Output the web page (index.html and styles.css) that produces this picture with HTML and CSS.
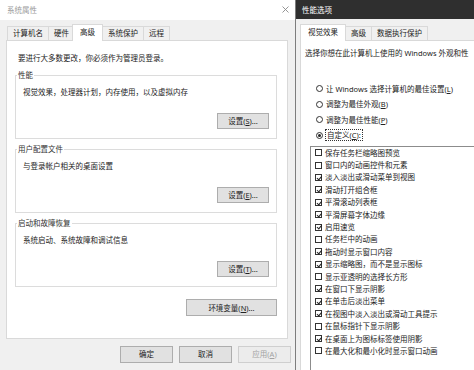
FILE: index.html
```html
<!DOCTYPE html>
<html lang="zh-CN">
<head>
    <meta charset="UTF-8">
    <title>系统属性</title>
    <link rel="stylesheet" href="styles.css">
</head>
<body>

<div class="screen">

    <!-- 系统属性 -->
    <div class="win sys">
        <div class="titlebar">
            <span class="title">系统属性</span>
            <svg class="close" width="7" height="7" viewBox="0 0 7 7">
                <path d="M0.5 0.5 L6.5 6.5 M6.5 0.5 L0.5 6.5" stroke="#8a8a8a" stroke-width="0.9"/>
            </svg>
        </div>

        <div class="tabs">
            <div class="tab">计算机名</div>
            <div class="tab">硬件</div>
            <div class="tab active">高级</div>
            <div class="tab">系统保护</div>
            <div class="tab">远程</div>
        </div>

        <div class="panel">
            <p class="intro">要进行大多数更改，你必须作为管理员登录。</p>

            <fieldset class="group">
                <legend>性能</legend>
                <p>视觉效果，处理器计划，内存使用，以及虚拟内存</p>
                <button class="btn">设置(<u>S</u>)...</button>
            </fieldset>

            <fieldset class="group">
                <legend>用户配置文件</legend>
                <p>与登录帐户相关的桌面设置</p>
                <button class="btn">设置(<u>E</u>)...</button>
            </fieldset>

            <fieldset class="group">
                <legend>启动和故障恢复</legend>
                <p>系统启动、系统故障和调试信息</p>
                <button class="btn">设置(<u>T</u>)...</button>
            </fieldset>

            <button class="btn env">环境变量(<u>N</u>)...</button>
        </div>

        <div class="footer">
            <button class="btn">确定</button>
            <button class="btn">取消</button>
            <button class="btn" disabled>应用(<u>A</u>)</button>
        </div>
    </div>

    <!-- 性能选项 -->
    <div class="win perf">
        <div class="titlebar dark">
            <span class="title">性能选项</span>
        </div>

        <div class="tabs">
            <div class="tab active">视觉效果</div>
            <div class="tab">高级</div>
            <div class="tab">数据执行保护</div>
        </div>

        <div class="panel">
            <p class="intro">选择你想在此计算机上使用的 Windows 外观和性</p>

            <div class="radios">
                <div class="radio"><span class="dot"></span>让 Windows 选择计算机的最佳设置(<u>L</u>)</div>
                <div class="radio"><span class="dot"></span>调整为最佳外观(<u>B</u>)</div>
                <div class="radio"><span class="dot"></span>调整为最佳性能(<u>P</u>)</div>
                <div class="radio"><span class="dot on"></span><span class="focus">自定义(<u>C</u>):</span></div>
            </div>

            <div class="listbox">
                <div class="item"><span class="cb"></span>保存任务栏缩略图预览</div>
                <div class="item"><span class="cb"></span>窗口内的动画控件和元素</div>
                <div class="item"><span class="cb on"></span>淡入淡出或滑动菜单到视图</div>
                <div class="item"><span class="cb on"></span>滑动打开组合框</div>
                <div class="item"><span class="cb on"></span>平滑滚动列表框</div>
                <div class="item"><span class="cb on"></span>平滑屏幕字体边缘</div>
                <div class="item"><span class="cb on"></span>启用速览</div>
                <div class="item"><span class="cb"></span>任务栏中的动画</div>
                <div class="item"><span class="cb on"></span>拖动时显示窗口内容</div>
                <div class="item"><span class="cb on"></span>显示缩略图，而不是显示图标</div>
                <div class="item"><span class="cb"></span>显示亚透明的选择长方形</div>
                <div class="item"><span class="cb on"></span>在窗口下显示阴影</div>
                <div class="item"><span class="cb on"></span>在单击后淡出菜单</div>
                <div class="item"><span class="cb on"></span>在视图中淡入淡出或滑动工具提示</div>
                <div class="item"><span class="cb"></span>在鼠标指针下显示阴影</div>
                <div class="item"><span class="cb on"></span>在桌面上为图标标签使用阴影</div>
                <div class="item"><span class="cb"></span>在最大化和最小化时显示窗口动画</div>
            </div>
        </div>
    </div>

</div>

</body>
</html>
```

FILE: styles.css
```css
* {
    margin: 0;
    padding: 0;
    box-sizing: border-box;
}
html, body {
    width: 474px;
    height: 370px;
    overflow: hidden;
}
body {
    font-family: "Noto Sans", "Noto Sans CJK SC", sans-serif;
    font-size: 7.5px;
    line-height: 10px;
    color: #222;
    background: #f0f0f0;
}
u {
    text-decoration: underline;
    text-underline-offset: 1px;
}

.screen {
    display: flex;
    width: 474px;
    height: 370px;
}

/* windows */
.win {
    background: #f0f0f0;
    display: flex;
    flex-direction: column;
    height: 370px;
}
.sys {
    width: 295px;
}
.perf {
    flex: 1;
    border-left: 1px solid #7d7d7d;
    overflow: hidden;
}

.titlebar {
    height: 20px;
    background: #fff;
    display: flex;
    align-items: center;
    justify-content: space-between;
    padding: 0 6px 0 7px;
    flex-shrink: 0;
}
.titlebar .title {
    color: #9a9a9a;
}
.titlebar.dark {
    height: 19px;
    background: #2f2f2f;
    padding-left: 6px;
}
.titlebar.dark .title {
    color: #fff;
}
.close {
    margin-top: -1px;
}

/* tabs */
.tabs {
    display: flex;
    align-items: flex-end;
    height: 20px;
    padding-left: 7px;
    flex-shrink: 0;
}
.perf .tabs {
    height: 21px;
    padding-left: 6px;
}
.tab {
    height: 14px;
    line-height: 13px;
    padding: 0 5px;
    border: 1px solid #d9d9d9;
    border-bottom: none;
    margin-right: -1px;
    background: #f0f0f0;
    white-space: nowrap;
}
.tab.active {
    height: 17px;
    line-height: 15px;
    background: #fff;
    margin: 0 -1px -1px -2px;
    padding: 0 7px;
    position: relative;
    z-index: 1;
}

/* tab page */
.panel {
    background: #fff;
    border: 1px solid #d9d9d9;
    flex-shrink: 0;
}
.sys .panel {
    height: 299px;
    margin: 0 7px 0 6px;
    padding: 0 10px 0 8px;
    display: flex;
    flex-direction: column;
}
.perf .panel {
    height: 340px;
    margin: 0 -10px 0 4px;
    padding: 0 4px;
}

.intro {
    white-space: nowrap;
}
.sys .intro {
    margin-top: 12px;
    padding-left: 3px;
}
.perf .intro {
    margin-top: 7px;
}

/* group boxes */
.group {
    border: 1px solid #dcdcdc;
    padding: 0 7px 9px 7px;
    margin-top: 5px;
    min-width: 0;
}
.sys .intro + .group {
    margin-top: 7px;
}
.group legend {
    margin-left: -6px;
    padding: 0 1px;
    line-height: 10px;
    color: #333;
}
.group p {
    margin-top: 7px;
}

/* buttons */
.btn {
    display: block;
    font: inherit;
    color: #222;
    width: 52px;
    height: 16px;
    line-height: 14px;
    background: #e1e1e1;
    border: 1px solid #adadad;
    text-align: center;
}
.group .btn {
    margin: 16px 0 0 auto;
}
.btn.env {
    width: 91px;
    height: 17px;
    margin: 12px 0 0 auto;
}
.btn:disabled {
    color: #a2a2a2;
    background: #ececec;
    border-color: #cfcfcf;
}

.footer {
    display: flex;
    justify-content: flex-end;
    gap: 6px;
    padding: 7px 4px 0 0;
}
.footer .btn {
    width: 53px;
    height: 17px;
    line-height: 15px;
}

/* radios */
.radios {
    margin-top: 23px;
    padding-left: 11px;
}
.radio {
    height: 15.5px;
    display: flex;
    align-items: center;
    white-space: nowrap;
}
.dot {
    width: 7px;
    height: 7px;
    border: 1px solid #333;
    border-radius: 50%;
    margin-right: 3px;
    flex-shrink: 0;
    display: flex;
    align-items: center;
    justify-content: center;
}
.dot.on::after {
    content: "";
    width: 3px;
    height: 3px;
    border-radius: 50%;
    background: #222;
}
.focus {
    outline: 1px dotted #333;
    outline-offset: 0;
    padding: 0 1px;
}

/* list of checkboxes */
.listbox {
    margin: 2.5px 0 0 5px;
    height: 240px;
    border: 1px solid #8c8c8c;
    padding-left: 4px;
}
.item {
    height: 12.4px;
    display: flex;
    align-items: center;
    white-space: nowrap;
}
.cb {
    width: 7px;
    height: 7px;
    border: 1px solid #333;
    margin-right: 3px;
    flex-shrink: 0;
    position: relative;
}
.cb.on::after {
    content: "";
    position: absolute;
    left: 1.6px;
    top: -0.2px;
    width: 1.6px;
    height: 3.6px;
    border-right: 1px solid #222;
    border-bottom: 1px solid #222;
    transform: rotate(40deg);
}
```
